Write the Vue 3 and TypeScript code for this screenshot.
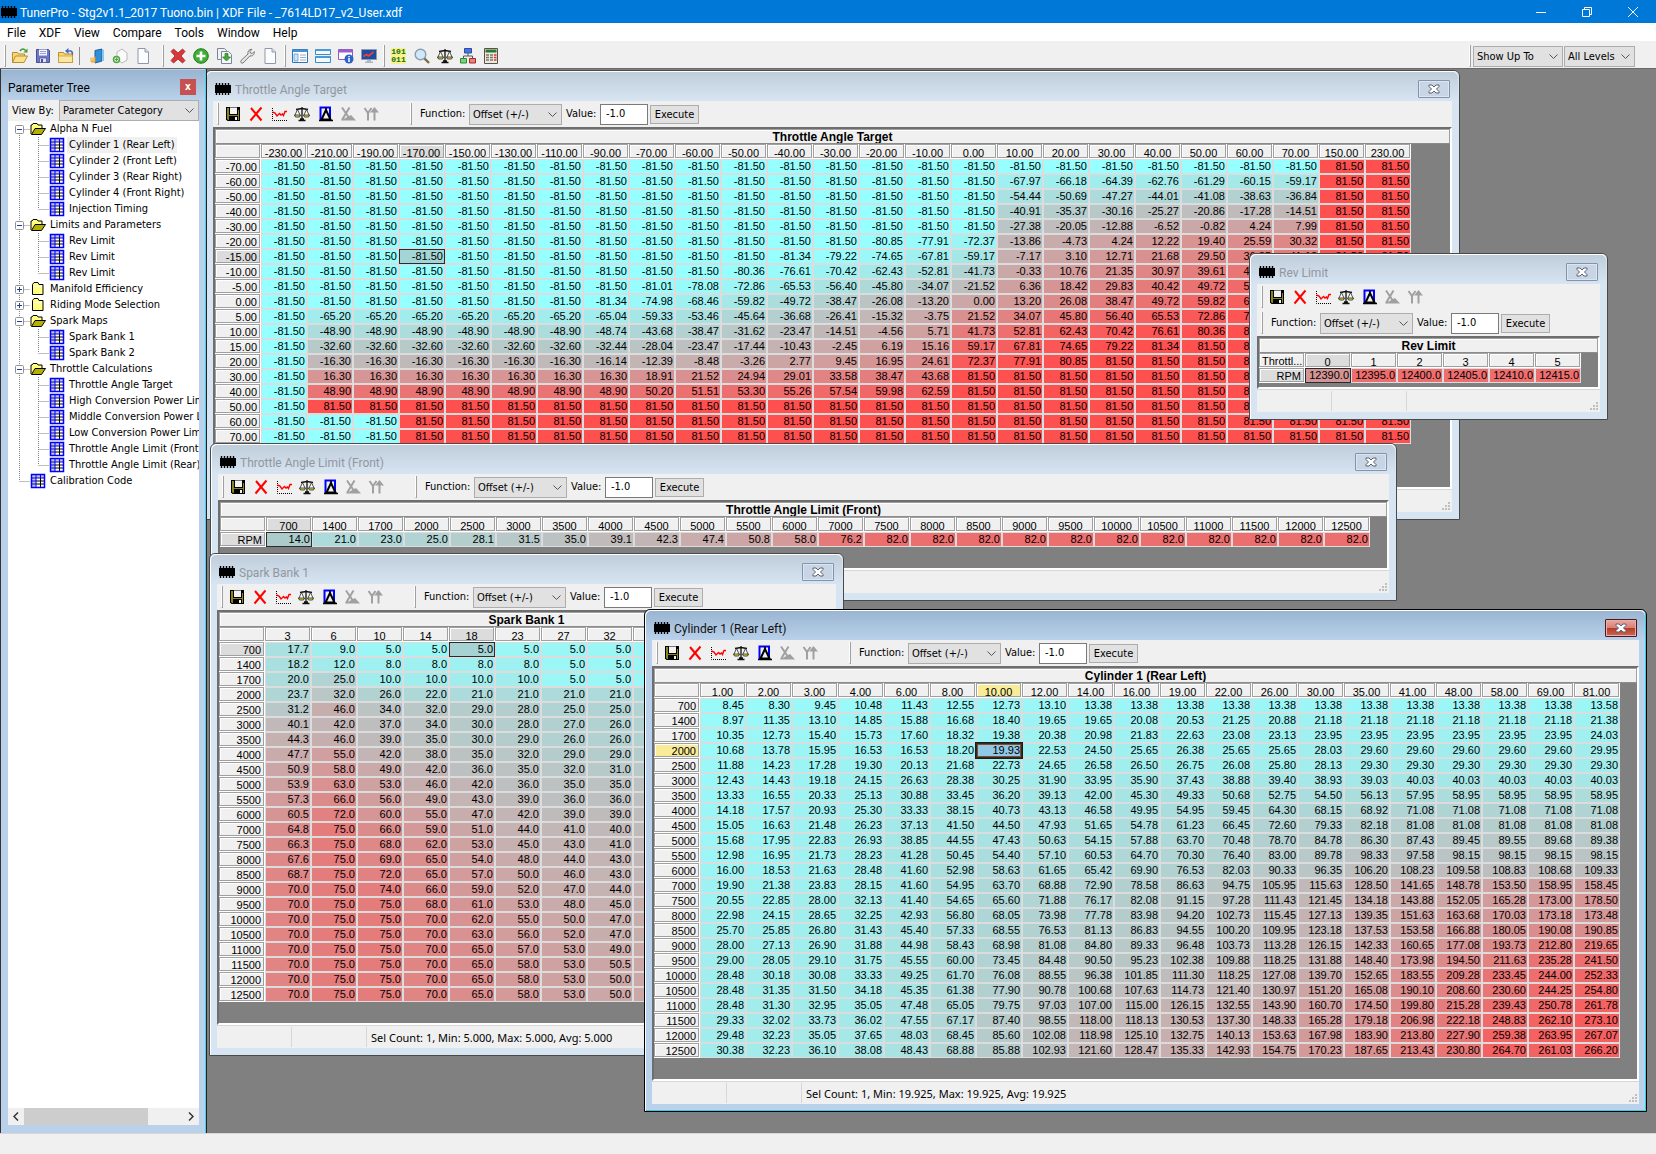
<script setup lang="ts">
interface GridWindow {
  id: string
  title: string
  x: number
  y: number
  w: number
  h: number
  active?: boolean
  corner?: string
  cols: string[]
  rowHeads: string[]
  rows: string[][]
  min: number
  max: number
  sel: [number, number]
  selColor: string
  status?: string
}

interface TreeNode {
  label: string
  kind: 'open' | 'closed' | 'item'
  children?: string[]
}

// "v*n" repeats the value v n times
function expand(line: string): string[] {
  const out: string[] = []
  for (const token of line.trim().split(/\s+/)) {
    const [value, count] = token.split('*')
    for (let i = 0; i < Number(count || 1); i++) out.push(value)
  }
  return out
}

function table(text: string): string[][] {
  return text.trim().split('\n').map(expand)
}

// cyan -> grey -> red heat scale
const LOW = [150, 255, 255]
const MID = [190, 190, 190]
const HIGH = [255, 80, 80]
const MID_AT = 0.37

function heat(win: GridWindow, value: string): string {
  const t = Math.min(1, Math.max(0, (Number(value) - win.min) / (win.max - win.min)))
  const [from, to, f] = t < MID_AT ? [LOW, MID, t / MID_AT] : [MID, HIGH, (t - MID_AT) / (1 - MID_AT)]
  return `rgb(${from.map((c, i) => Math.round(c + (to[i] - c) * f)).join(',')})`
}

function cellColor(win: GridWindow, r: number, c: number, value: string): string {
  return win.sel[0] === r && win.sel[1] === c ? win.selColor : heat(win, value)
}

const throttleTarget = table(`
-81.50*23 81.50*2
-81.50*16 -67.97 -66.18 -64.39 -62.76 -61.29 -60.15 -59.17 81.50*2
-81.50*16 -54.44 -50.69 -47.27 -44.01 -41.08 -38.63 -36.84 81.50*2
-81.50*16 -40.91 -35.37 -30.16 -25.27 -20.86 -17.28 -14.51 81.50*2
-81.50*16 -27.38 -20.05 -12.88 -6.52 -0.82 4.24 7.99 81.50*2
-81.50*13 -80.85 -77.91 -72.37 -13.86 -4.73 4.24 12.22 19.40 25.59 30.32 81.50*2
-81.50*11 -81.34 -79.22 -74.65 -67.81 -59.17 -7.17 3.10 12.71 21.68 29.50 36.35 41.18 81.50*2
-81.50*10 -80.36 -76.61 -70.42 -62.43 -52.81 -41.73 -0.33 10.76 21.35 30.97 39.61 46.94 52.81 81.50*2
-81.50*8 -81.01 -78.08 -72.86 -65.53 -56.40 -45.80 -34.07 -21.52 6.36 18.42 29.83 40.42 49.72 57.54 63.89 81.50*2
-81.50*7 -81.34 -74.98 -68.46 -59.82 -49.72 -38.47 -26.08 -13.20 0.00 13.20 26.08 38.47 49.72 59.82 68.46 74.98 81.50*2
-81.50 -65.20*6 -65.04 -59.33 -53.46 -45.64 -36.68 -26.41 -15.32 -3.75 21.52 34.07 45.80 56.40 65.53 72.86 78.08 81.01 81.50*2
-81.50 -48.90*6 -48.74 -43.68 -38.47 -31.62 -23.47 -14.51 -4.56 5.71 41.73 52.81 62.43 70.42 76.61 80.36 81.50*4
-81.50 -32.60*6 -32.44 -28.04 -23.47 -17.44 -10.43 -2.45 6.19 15.16 59.17 67.81 74.65 79.22 81.34 81.50*5
-81.50 -16.30*6 -16.14 -12.39 -8.48 -3.26 2.77 9.45 16.95 24.61 72.37 77.91 80.85 81.50*7
-81.50 16.30*7 18.91 21.52 24.94 29.01 33.58 38.47 43.68 81.50*10
-81.50 48.90*7 50.20 51.51 53.30 55.26 57.54 59.98 62.59 81.50*10
-81.50 81.50*24
-81.50*3 81.50*22
-81.50*3 81.50*22`)

const sparkBank = table(`
17.7 9.0 5.0*7
18.2 12.0 8.0*4 5.0*3
20.0 25.0 10.0*4 5.0*3
23.7 32.0 26.0 22.0 21.0*5
31.2 46.0 34.0 32.0 29.0 28.0 25.0*3
40.1 42.0 37.0 34.0 30.0 28.0 27.0 26.0*2
44.3 46.0 39.0 35.0 30.0 29.0 26.0*3
47.7 55.0 42.0 38.0 35.0 32.0 29.0*3
50.9 58.0 49.0 42.0 36.0 35.0 32.0 31.0*2
53.9 63.0 53.0 46.0 42.0 36.0 35.0*3
57.3 66.0 56.0 49.0 43.0 39.0 36.0*3
60.5 72.0 60.0 55.0 47.0 42.0 39.0*2 38.0
64.8 75.0 66.0 59.0 51.0 44.0 41.0 40.0 39.0
66.3 75.0 68.0 62.0 53.0 45.0 43.0 41.0 40.0
67.6 75.0 69.0 65.0 54.0 48.0 44.0 43.0 41.0
68.7 75.0 72.0 65.0 57.0 50.0 46.0 43.0 42.0
70.0 75.0 74.0 66.0 59.0 52.0 47.0 44.0*2
70.0 75.0*2 68.0 61.0 53.0 48.0 45.0*2
70.0 75.0*2 70.0 62.0 55.0 50.0 47.0*2
70.0 75.0*2 70.0 63.0 56.0 52.0 47.0*2
70.0 75.0*2 70.0 65.0 57.0 53.0 49.0*2
70.0 75.0*2 70.0 65.0 58.0 53.0 50.5 50.0
70.0 75.0*2 70.0 65.0 58.0 53.0 50.0*2
70.0 75.0*2 70.0 65.0 58.0 53.0 50.0*2`)

const cylinder = table(`
8.45 8.30 9.45 10.48 11.43 12.55 12.73 13.10 13.38*11 13.58
8.97 11.35 13.10 14.85 15.88 16.68 18.40 19.65 19.65 20.08 20.53 21.25 20.88 21.18*6 21.38
10.35 12.73 15.40 15.73 17.60 18.32 19.38 20.38 20.98 21.83 22.63 23.08 23.13 23.95*6 24.03
10.68 13.78 15.95 16.53 16.53 18.20 19.93 22.53 24.50 25.65 26.38 25.65 25.65 28.03 29.60*5 29.95
11.88 14.23 17.28 19.30 20.13 21.68 22.73 24.65 26.58 26.50 26.75 26.08 25.80 28.13 29.30*6
12.43 14.43 19.18 24.15 26.63 28.38 30.25 31.90 33.95 35.90 37.43 38.88 39.40 38.93 39.03 40.03*5
13.33 16.55 20.33 25.13 30.88 33.45 36.20 39.13 42.00 45.30 49.33 50.68 52.75 54.50 56.13 57.95 58.95*4
14.18 17.57 20.93 25.30 33.33 38.15 40.73 43.13 46.58 49.95 54.95 59.45 64.30 68.15 68.92 71.08*5
15.05 16.63 21.48 26.23 37.13 41.50 44.50 47.93 51.65 54.78 61.23 66.45 72.60 79.33 82.18 81.08*5
15.68 17.95 22.83 26.93 38.85 44.55 47.43 50.63 54.15 57.88 63.70 70.48 78.70 84.78 86.30 87.43 89.45 89.55 89.68 89.38
12.98 16.95 21.73 28.23 41.28 50.45 54.40 57.10 60.53 64.70 70.30 76.40 83.00 89.78 98.33 97.58 98.15*4
16.00 18.53 21.63 28.48 41.60 52.98 58.63 61.65 65.42 69.90 76.53 82.03 90.33 96.35 106.20 108.23 109.58 108.83 108.68 109.33
19.90 21.38 23.83 28.15 41.60 54.95 63.70 68.88 72.90 78.58 86.63 94.75 105.95 115.63 128.50 141.65 148.78 153.50 158.95 158.45
20.55 22.85 28.00 32.13 41.40 54.65 65.60 71.88 76.17 82.08 91.15 97.28 111.43 121.45 134.18 143.88 152.05 165.28 173.00 178.50
22.98 24.15 28.65 32.25 42.93 56.80 68.05 73.98 77.78 83.98 94.20 102.73 115.45 127.13 139.35 151.63 163.68 170.03 173.18 173.48
25.70 25.85 26.80 31.43 45.40 57.33 68.55 76.53 81.13 86.83 94.55 100.20 109.95 123.18 137.53 153.58 166.88 180.05 190.08 190.85
28.00 27.13 26.90 31.88 44.98 58.43 68.98 81.08 84.80 89.33 96.48 103.73 113.28 126.15 142.33 160.65 177.08 193.73 212.80 219.65
29.00 28.05 29.10 31.75 45.55 60.00 73.45 84.48 90.50 95.23 102.38 109.88 118.25 131.88 148.40 173.98 194.50 211.63 235.28 241.50
28.48 30.18 30.08 33.33 49.25 61.70 76.08 88.55 96.38 101.85 111.30 118.25 127.08 139.70 152.65 183.55 209.28 233.45 244.00 252.33
28.48 31.35 31.50 34.18 45.35 61.38 77.90 90.78 100.68 107.63 114.73 121.40 130.97 151.20 165.08 190.10 208.60 230.60 244.25 254.80
28.48 31.30 32.95 35.05 47.48 65.05 79.75 97.03 107.00 115.00 126.15 132.55 143.90 160.70 174.50 199.80 215.28 239.43 250.78 261.78
29.33 32.02 33.73 36.02 47.55 67.17 87.40 98.55 118.00 118.13 130.53 137.30 148.33 165.28 179.18 206.98 222.18 248.83 262.10 273.10
29.48 32.23 35.05 37.65 48.03 68.45 85.60 102.08 118.98 125.10 132.75 140.13 153.63 167.98 183.90 213.80 227.90 259.38 263.95 267.07
30.38 32.23 36.10 38.08 48.43 68.88 85.88 102.93 121.60 128.47 135.33 142.93 154.75 170.23 187.65 213.43 230.80 264.70 261.03 266.20`)

const rpm = expand('700 1400 1700 2000 2500 3000 3500 4000 4500 5000 5500 6000 7000 7500 8000 8500 9000 9500 10000 10500 11000 11500 12000 12500')

// coordinates are relative to the MDI client area; later windows lie on top
const windows: GridWindow[] = [
  {
    id: 'tat', title: 'Throttle Angle Target', x: -2, y: 1, w: 1255, h: 450,
    cols: expand('-230.00 -210.00 -190.00 -170.00 -150.00 -130.00 -110.00 -90.00 -70.00 -60.00 -50.00 -40.00 -30.00 -20.00 -10.00 0.00 10.00 20.00 30.00 40.00 50.00 60.00 70.00 150.00 230.00'),
    rowHeads: expand('-70.00 -60.00 -50.00 -40.00 -30.00 -20.00 -15.00 -10.00 -5.00 0.00 5.00 10.00 15.00 20.00 30.00 40.00 50.00 60.00 70.00'),
    rows: throttleTarget, min: -81.5, max: 81.5, sel: [6, 3], selColor: '#a2d6d6'
  },
  {
    id: 'rev', title: 'Rev Limit', x: 1042, y: 184, w: 359, h: 167, corner: 'Throttl...',
    cols: expand('0 1 2 3 4 5'), rowHeads: ['RPM'],
    rows: table('12390.0 12395.0 12400.0 12405.0 12410.0 12415.0'),
    min: 0, max: 15000, sel: [0, 0], selColor: '#d29494'
  },
  {
    id: 'talf', title: 'Throttle Angle Limit (Front)', x: 3, y: 374, w: 1187, h: 158,
    cols: rpm, rowHeads: ['RPM'],
    rows: table('14.0 21.0 23.0 25.0 28.1 31.5 35.0 39.1 42.3 47.4 50.8 58.0 76.2 82.0*11'),
    min: 0, max: 100, sel: [0, 0], selColor: '#accccc'
  },
  {
    id: 'sb1', title: 'Spark Bank 1', x: 2, y: 484, w: 635, h: 503,
    cols: expand('3 6 10 14 18 23 27 32 36'), rowHeads: rpm,
    rows: sparkBank, min: 0, max: 100, sel: [0, 4], selColor: '#a6d2d4',
    status: 'Sel Count: 1, Min: 5.000, Max: 5.000, Avg: 5.000'
  },
  {
    id: 'cyl1', title: 'Cylinder 1 (Rear Left)', x: 437, y: 540, w: 1003, h: 503, active: true,
    cols: expand('1.00 2.00 3.00 4.00 6.00 8.00 10.00 12.00 14.00 16.00 19.00 22.00 26.00 30.00 35.00 41.00 48.00 58.00 69.00 81.00'),
    rowHeads: rpm, rows: cylinder, min: 0, max: 292, sel: [3, 6], selColor: '#90c8e8',
    status: 'Sel Count: 1, Min: 19.925, Max: 19.925, Avg: 19.925'
  }
]

const tree: TreeNode[] = [
  { label: 'Alpha N Fuel', kind: 'open', children: ['Cylinder 1 (Rear Left)', 'Cylinder 2 (Front Left)', 'Cylinder 3 (Rear Right)', 'Cylinder 4 (Front Right)', 'Injection Timing'] },
  { label: 'Limits and Parameters', kind: 'open', children: ['Rev Limit', 'Rev Limit', 'Rev Limit'] },
  { label: 'Manifold Efficiency', kind: 'closed' },
  { label: 'Riding Mode Selection', kind: 'closed' },
  { label: 'Spark Maps', kind: 'open', children: ['Spark Bank 1', 'Spark Bank 2'] },
  { label: 'Throttle Calculations', kind: 'open', children: ['Throttle Angle Target', 'High Conversion Power Limit', 'Middle Conversion Power Limit', 'Low Conversion Power Limit', 'Throttle Angle Limit (Front)', 'Throttle Angle Limit (Rear)'] },
  { label: 'Calibration Code', kind: 'item' }
]

const menus = ['File', 'XDF', 'View', 'Compare', 'Tools', 'Window', 'Help']

const page = '<path d="M3 .5h7l3.500 3.500v11.500H3z" fill="#fdfdff" stroke="#8f98a8"/><path d="M10 .5v3.500h3.500" fill="#dfe4ee" stroke="#8f98a8"/>'
const scales = '<path d="M8 1v12M2 3.500l6-1 6 1M4.500 14.500h7M6 13h4" stroke="#111" stroke-width="1.300" fill="none"/><path d="M3.500 3.500L.8 9.500h5.400zM12.500 3.500L9.800 9.500h5.400z" fill="#fff" stroke="#222" stroke-width=".8"/><path d="M.5 9h6l-1 2h-4zM9.500 9h6l-1 2h-4z" fill="#e6e23c" stroke="#222" stroke-width=".8"/>'

const icons: Record<string, string> = {
  open: '<path d="M.5 14.500v-10h5l1 1.500h6v3" fill="#f7d77a" stroke="#b98d2c"/><path d="M.5 14.500l3-6.500h12l-3.500 6.500z" fill="#fbe08c" stroke="#b98d2c"/><path d="M8 3c1.500-2.500 4-2.500 5.500-.5" fill="none" stroke="#3f9b36" stroke-width="1.500"/><path d="M15.500.5v4h-4z" fill="#3f9b36"/>',
  save: '<path d="M1.500 1.500h12l1 1v12h-13z" fill="#6f76c8" stroke="#484e98"/><path d="M4 1.500h8v6H4z" fill="#f2f4ff"/><path d="M5 3.500h6M5 5.500h6" stroke="#9aa0c8"/><path d="M4.500 10h7v4.500h-7z" fill="#dfe2f4" stroke="#484e98" stroke-width=".7"/><path d="M6 11h2v3H6z" fill="#484e98"/>',
  folderBack: '<path d="M.5 14.500V4.500h5l1 1.500h8v8.500z" fill="#f7d77a" stroke="#b98d2c"/><path d="M.5 14.500V8h14v6.500z" fill="#fbe6a0" stroke="#b98d2c" stroke-width=".6"/><path d="M9 3h3.500c1.500 0 2 1 2 3.500" fill="none" stroke="#4a6ac0" stroke-width="1.500"/><path d="M10.500 0v6L7 3z" fill="#4a6ac0"/>',
  book: '<path d="M6 2.500l7-1.500v12l-7 2z" fill="#2f8fd8" stroke="#1d5f9c"/><path d="M13 1l2 1v11l-2 0z" fill="#8cc4ee"/><path d="M2 12.500L6.500 8v6.500H2z" fill="#f0a030"/><path d="M1 9.500h5v4H1z" fill="#f5c26a" opacity=".8"/>',
  tag: '<path d="M5 4l5-3 5 4v7l-5 3-5-4z" fill="#fafafa" stroke="#b8b8b8"/><circle cx="4.500" cy="11.500" r="3" fill="none" stroke="#4da53f" stroke-width="1.500"/><path d="M4.500 10v3M3 11.500h3" stroke="#4da53f" stroke-width="1.200"/>',
  page,
  redX: '<path d="M1 3.500L3.500 1 8 5l4.500-4L15 3.500 11 8l4 4.500-2.500 2.500L8 11l-4.500 4L1 12.500 5 8z" fill="#d8383a" stroke="#a31f22" stroke-width=".8"/>',
  plus: '<circle cx="8" cy="8" r="7.300" fill="#3fae35" stroke="#1f7a1b"/><path d="M8 3.500v9M3.500 8h9" stroke="#fff" stroke-width="2.600"/>',
  copyPlus: '<path d="M1.500.5h7l2 2v9h-9z" fill="#eef1f6" stroke="#7d8694"/><path d="M5.500 3.500h7l3 3v9h-10z" fill="#f4f6fa" stroke="#7d8694"/><path d="M9 5.500h3v3.500h2.500L10.500 13 6.500 9H9z" fill="#46ab38" stroke="#23771c" stroke-width=".7"/>',
  wrench: '<path d="M2 12.500L9 6c-.6-2.500 1-4.800 4-4.800L11 3.500l.6 1.600 1.700.4L15.300 3.500c.5 3-1.800 5-4.300 4.400L4 15c-1.700.6-3-1-2-2.500z" fill="#e4e4e4" stroke="#7a7a7a"/>',
  layout1: '<path d="M.5 1.500h15v13H.5z" fill="#fff" stroke="#2e75b6"/><path d="M.5 1.500h15v2.500H.5z" fill="#4a90d0"/><path d="M2 6h4v7H2z" fill="#cfe3f5" stroke="#4a90d0" stroke-width=".7"/><path d="M8 7h6M8 9.500h6M8 12h6" stroke="#9ab"/>',
  layout2: '<path d="M.5 1.500h15v5H.5zM.5 8.500h15v6H.5z" fill="#f2f8fd" stroke="#3c8ac8"/><path d="M.5 1h15v2H.5zM.5 8h15v2H.5z" fill="#4a9ad8"/>',
  layoutInfo: '<path d="M.5 1.500h14v10H.5z" fill="#fff" stroke="#8a5cb8"/><path d="M.5 1.500h14v3H.5z" fill="#9a5fc8"/><circle cx="11" cy="11" r="4.500" fill="#2d62c8"/><path d="M11 10v4M11 8v1.300" stroke="#fff" stroke-width="1.500"/>',
  monitor: '<path d="M.5 1.500h15v10H.5z" fill="#1c4fa0" stroke="#8f9bb0"/><path d="M2.500 8.500l3-2 2 1.500 5-4" fill="none" stroke="#ff3b30" stroke-width="1.700"/><path d="M6 12h4v1.500h2V15H4v-1.500h2z" fill="#b0b8c4"/>',
  magnifier: '<circle cx="6.500" cy="6.500" r="5.300" fill="#cfe8fa" stroke="#8c9cac" stroke-width="1.400"/><path d="M10.500 10.500L15 15" stroke="#7a6a50" stroke-width="2.400"/>',
  scales,
  network: '<path d="M4.500.5h7v4.500h-7z" fill="#4a74e0" stroke="#2a4ca8"/><path d="M8 5v3M3.500 10V8h9v2" fill="none" stroke="#555"/><path d="M.5 10.500h6v4.500h-6z" fill="#7cd27c" stroke="#2f8a2f"/><path d="M9.500 10.500h6v4.500h-6z" fill="#e88080" stroke="#a82a2a"/>',
  calc: '<path d="M1.500.5h13v15h-13z" fill="#ece8de" stroke="#5a5248"/><path d="M2.500 1.500h11v3h-11z" fill="#2c7a30"/><path d="M3 7h3M7 7h3M3 9.500h3M7 9.500h3M3 12h3M7 12h3" stroke="#7c766c" stroke-width="1.400"/><path d="M11 7h2.500M11 9.500h2.500M11 12h2.500" stroke="#c83c32" stroke-width="1.400"/>',
  floppy: '<path d="M1 1h14v14H2.500L1 13.500z" fill="#000"/><path d="M2 2h2v7h9V4h1v10h-1v-4H4v4H3l-1-1z" fill="#8a8420"/><path d="M5 1.500h7V8H5z" fill="#f2f2f2"/><path d="M10 11h2v3h-2z" fill="#f2f2f2"/>',
  thinX: '<path d="M3 2l10.500 12.500M13.500 1.500L2.500 14.500" stroke="#f00" stroke-width="2" fill="none"/>',
  chart: '<path d="M1.500 2v12.500H16" stroke="#000" stroke-dasharray="1 1" fill="none"/><path d="M1.500 6l2.500 1 2 3 2.500-2.500L10 9l1.500-1 1 1.500L14 5.500h2" stroke="#f00" stroke-width="1.400" fill="none"/>',
  delta: '<path d="M3.500 14V1.500h9.500V12" stroke="#00f" stroke-width="2" fill="none"/><path d="M9 4L4.500 13.500h9z" fill="#f0f0f0" stroke="#000" stroke-width="2"/><path d="M2 14.500h14M9 1.500V5" stroke="#000" stroke-width="1.500"/>',
  xAxis: '<path d="M2 1.500l7.500 11M9.500 1.500L2 14" stroke="#a0a0a0" stroke-width="2" fill="none"/><path d="M1 14.500h15L11 9z" fill="#a0a0a0"/>',
  yAxis: '<path d="M1.500 2L5 7l3.500-5M5 7v7.500" stroke="#a0a0a0" stroke-width="2" fill="none"/><path d="M11.500 5v9.500" stroke="#a0a0a0" stroke-width="2"/><path d="M7 6.500h9L11.500 1z" fill="#a0a0a0"/>',
  chip: '<path d="M0 4h16v8H0z" fill="#000"/><path d="M1.500 2v12M4.500 2v12M7.500 2v12M10.500 2v12M13.500 2v12" stroke="#000" stroke-width="1.400"/>',
  folderOpen: '<path d="M1 13V4h1l1-1.500h4L8 4h4v3" fill="#ffff80" stroke="#000"/><path d="M1.500 13.500L5 7.500h10.500L11.500 13.500z" fill="#b5b000" stroke="#000"/>',
  folderClosed: '<path d="M2.500 13.500v-10l1.500-2h4l1 2h4v10z" fill="#ffff80" stroke="#000"/><path d="M4 5.500h8" stroke="#fff"/>',
  grid: '<path d="M1 1.500h14v13H1z" fill="#fff"/><path d="M1 1.500h5v13H1zM1 1.500h14V5H1z" fill="#c4c4c4"/><path d="M1 5h14M1 8h5M1 11h5M6 1v13M10.500 1v4" stroke="#00f"/><path d="M6 8h8M6 11h8M10.500 5v9" stroke="#000"/><path d="M1.500 1.500h13v13h-13z" fill="none" stroke="#00f" stroke-width="1.500"/>'
}

const mainGroups: string[][] = [
  ['open', 'save', 'folderBack', '|', 'book', 'tag', 'page'],
  ['redX', 'plus', 'copyPlus', 'wrench', 'page'],
  ['layout1', 'layout2', 'layoutInfo', 'monitor'],
  ['binary', 'magnifier', 'scales', 'network', 'calc']
]
const gridTools = ['floppy', 'thinX', 'chart', 'scales', 'delta', 'xAxis', 'yAxis']
</script>

<template>
  <div class="app">
    <header class="titlebar">
      <svg class="icon" viewBox="0 0 16 16" v-html="icons.chip"></svg>
      <h1>TunerPro - Stg2v1.1_2017 Tuono.bin | XDF File - _7614LD17_v2_User.xdf</h1>
      <div class="sysbuttons">
        <button type="button" aria-label="Minimize"><svg viewBox="0 0 10 10"><path d="M0 5.500h10" /></svg></button>
        <button type="button" aria-label="Restore"><svg viewBox="0 0 10 10"><path d="M.5 2.500h7v7h-7zM2.500 2.500v-2h7v7h-2" /></svg></button>
        <button type="button" aria-label="Close"><svg viewBox="0 0 10 10"><path d="M0 0l10 10M10 0L0 10" /></svg></button>
      </div>
    </header>

    <nav class="menubar">
      <button v-for="m in menus" :key="m" type="button">{{ m }}</button>
    </nav>

    <div class="toolbar">
      <div v-for="(group, g) in mainGroups" :key="g" class="group">
        <i class="grip"></i>
        <template v-for="(name, i) in group" :key="i">
          <i v-if="name === '|'" class="sep"></i>
          <button v-else type="button" class="tool" :aria-label="name">
            <span v-if="name === 'binary'" class="binary">101<br>011</span>
            <svg v-else class="icon" viewBox="0 0 16 16" v-html="icons[name]"></svg>
          </button>
        </template>
      </div>
      <div class="group levels">
        <i class="grip"></i>
        <span class="combo show">
          <select aria-label="Show filter"><option>Show Up To</option></select>
          <svg viewBox="0 0 9 6"><path d="M.5 .5l4 4 4-4" /></svg>
        </span>
        <span class="combo all">
          <select aria-label="Level"><option>All Levels</option></select>
          <svg viewBox="0 0 9 6"><path d="M.5 .5l4 4 4-4" /></svg>
        </span>
      </div>
    </div>

    <main class="workspace">
      <aside class="panel">
        <header class="panel-head">
          <h2>Parameter Tree</h2>
          <button type="button" aria-label="Close panel">x</button>
        </header>
        <div class="panel-body">
          <div class="viewby">
            <label for="viewby">View By:</label>
            <span class="combo">
              <select id="viewby"><option>Parameter Category</option></select>
              <svg viewBox="0 0 9 6"><path d="M.5 .5l4 4 4-4" /></svg>
            </span>
          </div>
          <ul class="tree">
            <li v-for="(node, n) in tree" :key="n">
              <div class="row">
                <svg class="guide root" viewBox="0 0 22 16">
                  <path class="dots" :d="n === 0 ? 'M11.500 8v8' : n === tree.length - 1 ? 'M11.500 0v8' : 'M11.500 0v16'" />
                  <path class="dots" d="M11.500 8.500H22" />
                  <template v-if="node.kind !== 'item'">
                    <rect class="box" x="7.500" y="4.500" width="8" height="8" rx="1" />
                    <path class="sign" :d="node.kind === 'open' ? 'M9 8.500h5' : 'M9 8.500h5M11.500 6v5'" />
                  </template>
                </svg>
                <svg class="icon" viewBox="0 0 16 16" v-html="node.kind === 'item' ? icons.grid : node.kind === 'open' ? icons.folderOpen : icons.folderClosed"></svg>
                <span class="name">{{ node.label }}</span>
              </div>
              <ul v-if="node.children">
                <li v-for="(child, c) in node.children" :key="c" class="row">
                  <svg class="guide leaf" viewBox="0 0 41 16">
                    <path v-if="n < tree.length - 1" class="dots" d="M11.500 0v16" />
                    <path class="dots" :d="c === node.children.length - 1 ? 'M30.500 0v8' : 'M30.500 0v16'" />
                    <path class="dots" d="M30.500 8.500H41" />
                  </svg>
                  <svg class="icon" viewBox="0 0 16 16" v-html="icons.grid"></svg>
                  <span class="name" :class="{ current: n === 0 && c === 0 }">{{ child }}</span>
                </li>
              </ul>
            </li>
          </ul>
          <div class="hscroll">
            <button type="button" aria-label="Scroll left"><svg viewBox="0 0 6 9"><path d="M5 .5l-4 4 4 4" /></svg></button>
            <div class="track"><div class="thumb"></div></div>
            <button type="button" aria-label="Scroll right"><svg viewBox="0 0 6 9"><path d="M1 .5l4 4-4 4" /></svg></button>
          </div>
        </div>
      </aside>

      <div class="mdi">
        <section
          v-for="win in windows" :key="win.id" class="window" :class="{ active: win.active }"
          :style="{ left: win.x + 'px', top: win.y + 'px', width: win.w + 'px', height: win.h + 'px' }"
        >
          <header class="win-head">
            <svg class="icon" viewBox="0 0 16 16" v-html="icons.chip"></svg>
            <h2>{{ win.title }}</h2>
            <button type="button" class="win-close" aria-label="Close">
              <svg viewBox="0 0 12 10"><path d="M1 1h3l2 2 2-2h3v1.500L8.500 5 11 7.500V9H8L6 7 4 9H1V7.500L3.500 5 1 2.500z" /></svg>
            </button>
          </header>
          <div class="win-body">
            <div class="bands">
              <div class="band tools">
                <i class="grip"></i>
                <button v-for="t in gridTools" :key="t" type="button" class="tool" :aria-label="t">
                  <svg class="icon" viewBox="0 0 16 16" v-html="icons[t]"></svg>
                </button>
              </div>
              <div class="band">
                <i class="grip"></i>
                <label class="fn" :for="win.id + '-fn'">Function:</label>
                <span class="combo func">
                  <select :id="win.id + '-fn'"><option>Offset (+/-)</option></select>
                  <svg viewBox="0 0 9 6"><path d="M.5 .5l4 4 4-4" /></svg>
                </span>
                <label class="val" :for="win.id + '-val'">Value:</label>
                <input :id="win.id + '-val'" type="text" value="-1.0">
                <button type="button" class="execute">Execute</button>
              </div>
            </div>
            <div class="sheet">
              <div class="sheet-title">{{ win.title }}</div>
              <table>
                <thead>
                  <tr>
                    <th class="corner"><span>{{ win.corner }}</span></th>
                    <th v-for="(col, c) in win.cols" :key="c" class="col" :class="{ hot: c === win.sel[1] }" scope="col"><span>{{ col }}</span></th>
                  </tr>
                </thead>
                <tbody>
                  <tr v-for="(row, r) in win.rows" :key="r">
                    <th class="rowhead" :class="{ hot: r === win.sel[0] }" scope="row"><span>{{ win.rowHeads[r] }}</span></th>
                    <td
                      v-for="(v, c) in row" :key="c" :class="{ selected: r === win.sel[0] && c === win.sel[1] }"
                      :style="{ backgroundColor: cellColor(win, r, c, v) }"
                    >{{ v }}</td>
                  </tr>
                </tbody>
              </table>
            </div>
            <footer class="win-status">
              <span class="pane"></span><span class="pane"></span>
              <span class="msg">{{ win.status }}</span>
              <svg class="sizer" viewBox="0 0 9 9"><path d="M6 0h2v2H6zM3 3h2v2H3zM6 3h2v2H6zM0 6h2v2H0zM3 6h2v2H3zM6 6h2v2H6z" /></svg>
            </footer>
          </div>
        </section>
      </div>
    </main>

    <footer class="statusbar"></footer>
  </div>
</template>

<style>
body { margin: 0; }
</style>

<style scoped>
.app {
  --ui: Roboto, 'Liberation Sans', sans-serif;
  --dialog: 'DejaVu Sans Condensed', 'DejaVu Sans', sans-serif;
  display: flex;
  flex-direction: column;
  height: 100vh;
  background: #f0f0f0;
  color: #000;
  font: 11px/13px var(--dialog);
}
h1, h2, ul { margin: 0; padding: 0; font-weight: 400; list-style: none; }
button { margin: 0; padding: 0; border: 0; background: none; color: inherit; font: inherit; }
svg { display: block; flex: none; }
.icon { width: 16px; height: 16px; }

.titlebar { display: flex; align-items: center; height: 23px; background: #0078d7; color: #fff; padding-left: 1px; }
.titlebar h1 { flex: 1; margin-left: 3px; font: 12px/16px var(--ui); padding-top: 2px; }
.sysbuttons { display: flex; }
.sysbuttons button { display: flex; align-items: center; justify-content: center; width: 46px; height: 22px; }
.sysbuttons svg { width: 10px; height: 10px; fill: none; stroke: #fff; }

.menubar { display: flex; height: 18px; padding-left: 1px; background: #fff; }
.menubar button { padding: 2px 7px 0 6px; font: 12px/16px var(--ui); }

.toolbar { display: flex; align-items: center; gap: 3px; box-sizing: border-box; height: 27px; padding: 3px 0 0 4px; }
.group { display: flex; align-items: center; }
.group:first-child { margin-right: 5px; }
.grip { width: 1px; height: 21px; margin-right: 2px; border-left: 1px solid #fff; border-bottom: 1px solid #a0a0a0; background: #a0a0a0; flex: none; }
.sep { width: 1px; height: 18px; margin: 0 5px 0 2px; background: #8c8c8c; }
.tool { display: flex; align-items: center; justify-content: center; width: 23px; height: 22px; }
.binary { font: bold 8px/8px 'Liberation Mono', monospace; color: #1a6a1a; background: #f4f48a; }
.levels { margin-left: auto; padding-right: 20px; }
.levels .combo { margin-right: 1px; }

.combo { position: relative; display: block; height: 21px; }
.combo select { display: block; width: 100%; height: 100%; box-sizing: border-box; margin: 0; padding: 0 16px 0 3px; border: 1px solid #adadad; border-radius: 0; background: #e1e1e1; color: #000; font: inherit; appearance: none; }
.combo svg { position: absolute; right: 5px; top: 8px; width: 9px; height: 6px; fill: none; stroke: #555; pointer-events: none; }
.show { width: 90px; }
.all { width: 71px; }

.workspace { flex: 1; min-height: 0; display: flex; background: #808080; box-shadow: inset 0 1px #696969; overflow: hidden; }

.panel { display: flex; flex-direction: column; width: 207px; box-sizing: border-box; flex: none; padding: 1px 7px 8px; background: #b9d1ea; border-left: 1px solid #333; border-right: 1px solid #222; box-shadow: inset -1px 0 #45d0ee; margin-top: 1px; }
.panel-head { display: flex; align-items: flex-start; height: 30px; margin: 0 -6px 0 -7px; padding: 0 9px 0 7px; background: linear-gradient(#99b4d1, #b9d1ea); }
.panel-head h2 { flex: 1; padding-top: 10px; font: 12px/16px var(--ui); }
.panel-head button { width: 16px; height: 16px; margin-top: 9px; background: #c75050; color: #fff; font: bold 10px/12px var(--dialog); }
.panel-body { flex: 1; min-height: 0; display: flex; flex-direction: column; background: #fff; overflow: hidden; }
.viewby { display: flex; align-items: center; height: 21px; background: #f0f0f0; padding-left: 4px; }
.viewby label { width: 47px; white-space: nowrap; }
.viewby .combo { flex: 1; }
.tree { flex: 1; overflow: hidden; }
.row { display: flex; align-items: center; height: 16px; white-space: nowrap; }
.guide { height: 16px; }
.root { width: 22px; }
.leaf { width: 41px; }
.dots { fill: none; stroke: #808080; stroke-dasharray: 1 1; }
.box { fill: #fff; stroke: #919191; }
.sign { stroke: #2a3f9c; }
.name { margin-left: 2px; padding: 1px 2px 2px; }
.current { background: #f0f0f0; }
.hscroll { display: flex; height: 17px; background: #f0f0f0; }
.hscroll button { display: flex; align-items: center; justify-content: center; width: 16px; }
.hscroll svg { width: 6px; height: 9px; fill: none; stroke: #333; stroke-width: 1.5; }
.track { flex: 1; display: flex; }
.thumb { width: 78%; background: #cdcdcd; }

.mdi { flex: 1; position: relative; overflow: hidden; margin-top: 1px; }
.window { position: absolute; display: flex; flex-direction: column; box-sizing: border-box; border: 1px solid #4a4a4a; border-radius: 6px 6px 0 0; background: #d7e4f2; box-shadow: inset 1px 1px #fff; padding: 0 7px 7px; }
.window.active { border-color: #000; background: #b9d1ea; box-shadow: inset 1px 1px #fff, inset -1px -1px #2fd0ee; }
.win-head { display: flex; align-items: flex-start; height: 30px; margin: 0 -6px; padding: 0 8px; background: linear-gradient(#bfcddb, #d7e4f2); border-radius: 5px 5px 0 0; box-shadow: inset 0 1px #fff; flex: none; }
.active .win-head { background: linear-gradient(#99b4d1, #b9d1ea); }
.win-head .icon { margin-top: 10px; }
.win-head h2 { flex: 1; margin: 11px 0 0 4px; font: 12px/16px var(--ui); color: #92979e; }
.active .win-head h2 { color: #111; }
.win-close { display: flex; align-items: center; justify-content: center; box-sizing: border-box; width: 32px; height: 18px; margin-top: 9px; border: 1px solid #8393ab; border-radius: 1px; background: #c7d5e5; box-shadow: inset 0 0 0 1px #dbe6f2; }
.win-close svg { width: 12px; height: 10px; fill: #fff; stroke: #5a6070; }
.active .win-close { border-color: #4d1720; background: linear-gradient(#e9a8a0, #d98078 48%, #b83a26 52%, #c96a58); box-shadow: inset 0 0 0 1px #eab0a8; }
.win-body { flex: 1; min-height: 0; display: flex; flex-direction: column; background: #f0f0f0; }

.bands { display: flex; flex-wrap: wrap; padding-left: 4px; }
.band { display: flex; align-items: center; height: 26px; }
.band.tools { width: 193px; }
.band label { white-space: nowrap; padding-bottom: 1px; }
.fn { width: 49px; margin-left: 6px; }
.func { width: 93px; }
.val { width: 38px; padding-left: 4px; box-sizing: border-box; }
.band input { box-sizing: border-box; width: 48px; height: 21px; margin: 0; padding: 0 5px 2px; border: 1px solid #7a7a7a; background: #fff; color: #000; font: inherit; }
.execute { box-sizing: border-box; width: 49px; height: 19px; margin-left: 2px; border: 1px solid #adadad; background: #e1e1e1; }

.sheet { flex: 1; min-height: 0; overflow: hidden; background: #808080; border: 2px solid; border-color: #6e6e6e #fff #fff #6e6e6e; }
.sheet-title { box-sizing: border-box; height: 15px; border: 1px solid #a0a0a0; border-bottom-color: #8c8c8c; background: #f0f0f0; box-shadow: inset 1px 1px #fff; text-align: center; font: bold 12px/14px 'Liberation Sans', Arial, sans-serif; overflow: hidden; }
table { table-layout: fixed; width: 1px; border-collapse: separate; border-spacing: 0; font: 11px/13px 'Liberation Sans', Arial, sans-serif; }
th, td { box-sizing: border-box; width: 46px; height: 15px; }
td { padding: 0 1px 0 0; border: 1px solid #dcdcdc; text-align: right; }
th { padding: 0; background: #fff; font-weight: 400; }
th span { display: block; box-sizing: border-box; width: 45px; height: 14px; margin: 0 1px 1px 0; border: 1px solid #a0a0a0; background: #f0f0f0; box-shadow: inset 1px 1px #fff; overflow: hidden; }
.col span { text-align: center; line-height: 17px; }
.corner span { text-align: left; padding-left: 2px; line-height: 15px; }
.rowhead span { text-align: right; padding-right: 2px; line-height: 14px; }
.hot span { background: #dcdcdc; }
.active .hot span { background: #f8ec98; }
.selected { border-color: #2b2b2b; }
.active .selected { outline: 1px solid #1c1c1c; box-shadow: inset 0 0 0 1px #8a4a20; }

.win-status { display: flex; align-items: center; height: 23px; box-sizing: border-box; border-top: 1px solid #d7d7d7; font: 11px/16px 'Noto Sans', sans-serif; flex: none; }
.pane { box-sizing: border-box; width: 75px; height: 20px; border-right: 1px solid #d7d7d7; }
.msg { flex: 1; margin-left: 4px; padding-top: 2px; }
.sizer { width: 9px; height: 9px; align-self: flex-end; margin: 0 1px 1px 0; fill: #bfbfbf; }

.statusbar { height: 21px; box-sizing: border-box; border-top: 1px solid #d7d7d7; flex: none; }
</style>
